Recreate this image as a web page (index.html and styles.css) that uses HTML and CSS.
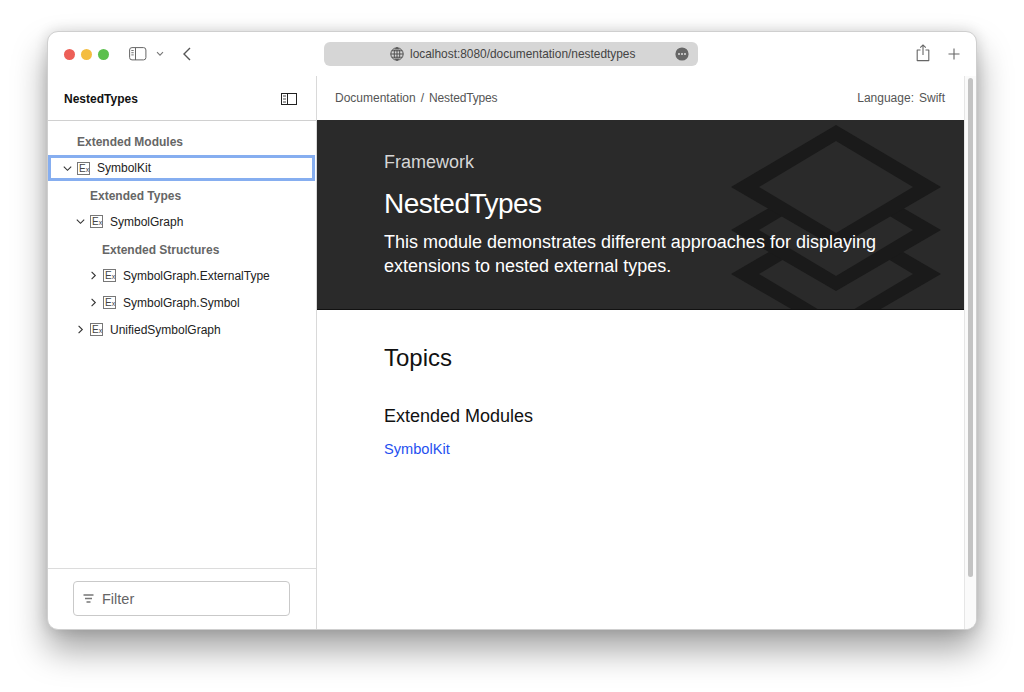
FILE: index.html
```html
<!DOCTYPE html>
<html lang="en">
<head>
<meta charset="utf-8">
<title>NestedTypes</title>
<link rel="stylesheet" href="styles.css">
</head>
<body>
<div class="window">
  <header class="toolbar">
    <div class="lights"><span class="light red"></span><span class="light yellow"></span><span class="light green"></span></div>
    <svg class="tb-sidebar" width="18" height="14" viewBox="0 0 18 14"><rect x="0.6" y="0.6" width="16.3" height="12.3" rx="2.4" fill="none" stroke="#666" stroke-width="1"/><path d="M6.5 1v12" stroke="#666" stroke-width="1"/><path d="M2.3 3.5h2.4M2.3 5.7h2.4M2.3 7.9h2.4" stroke="#777" stroke-width="1"/></svg>
    <svg class="tb-chevron" width="8" height="6" viewBox="0 0 8 6"><path d="M1 1.2 4 4.2 7 1.2" fill="none" stroke="#777" stroke-width="1.1"/></svg>
    <svg class="tb-back" width="10" height="14" viewBox="0 0 10 14"><path d="M8 1 2 7l6 6" fill="none" stroke="#555" stroke-width="1.4"/></svg>
    <div class="urlbar">
      <svg class="globe" width="14" height="14" viewBox="0 0 14 14"><g fill="none" stroke="#444" stroke-width="0.9"><circle cx="7" cy="7" r="6.2"/><ellipse cx="7" cy="7" rx="2.8" ry="6.2"/><path d="M7 .8v12.4M.8 7h12.4M1.800 3.800h10.400M1.800 10.200h10.400"/></g></svg>
      <span class="url">localhost:8080/documentation/nestedtypes</span>
      <svg class="more" width="14" height="14" viewBox="0 0 14 14"><circle cx="7" cy="7" r="6.6" fill="#666"/><circle cx="4" cy="7" r="1" fill="#ddd"/><circle cx="7" cy="7" r="1" fill="#ddd"/><circle cx="10" cy="7" r="1" fill="#ddd"/></svg>
    </div>
    <svg class="tb-share" width="14" height="18" viewBox="0 0 14 18"><path d="M4.500 6H1.200v10.600h11.600V6H9.500" fill="none" stroke="#666" stroke-width="1.1" stroke-linejoin="round"/><path d="M7 11V1M4.200 3.600 7 .9l2.800 2.700" fill="none" stroke="#666" stroke-width="1.1"/></svg>
    <svg class="tb-plus" width="12" height="12" viewBox="0 0 12 12"><path d="M6 .5v11M.5 6h11" stroke="#666" stroke-width="1.1"/></svg>
  </header>
  <div class="body">
    <aside class="sidebar">
      <div class="side-head">
        <span class="side-title">NestedTypes</span>
        <svg width="16" height="12" viewBox="0 0 16 12"><rect x="0.5" y="0.5" width="15" height="11" fill="none" stroke="#222" stroke-width="1"/><path d="M6.500 0.500v11" stroke="#222" stroke-width="1"/><path d="M2 3h3M2 6h3M2 9h3" stroke="#444" stroke-width="1"/></svg>
      </div>
      <nav class="tree">
        <div class="group lvl0">Extended Modules</div>
        <div class="row active lvl0">
          <svg class="chev" width="9" height="9" viewBox="0 0 9 9"><path d="M.8 2.600 4.500 6.300 8.200 2.600" fill="none" stroke="#333" stroke-width="1.1"/></svg>
          <span class="ex">E<small>x</small></span><span>SymbolKit</span>
        </div>
        <div class="group lvl1">Extended Types</div>
        <div class="row lvl1">
          <svg class="chev" width="9" height="9" viewBox="0 0 9 9"><path d="M.8 2.600 4.500 6.300 8.200 2.600" fill="none" stroke="#333" stroke-width="1.1"/></svg>
          <span class="ex">E<small>x</small></span><span>SymbolGraph</span>
        </div>
        <div class="group lvl2">Extended Structures</div>
        <div class="row lvl2">
          <svg class="chev" width="9" height="9" viewBox="0 0 9 9"><path d="M2.600.8 6.300 4.500 2.600 8.200" fill="none" stroke="#333" stroke-width="1.1"/></svg>
          <span class="ex">E<small>x</small></span><span>SymbolGraph.ExternalType</span>
        </div>
        <div class="row lvl2">
          <svg class="chev" width="9" height="9" viewBox="0 0 9 9"><path d="M2.600.8 6.300 4.500 2.600 8.200" fill="none" stroke="#333" stroke-width="1.1"/></svg>
          <span class="ex">E<small>x</small></span><span>SymbolGraph.Symbol</span>
        </div>
        <div class="row lvl1">
          <svg class="chev" width="9" height="9" viewBox="0 0 9 9"><path d="M2.600.8 6.300 4.500 2.600 8.200" fill="none" stroke="#333" stroke-width="1.1"/></svg>
          <span class="ex">E<small>x</small></span><span>UnifiedSymbolGraph</span>
        </div>
      </nav>
      <div class="filter-wrap">
        <div class="filter">
          <svg width="11" height="9" viewBox="0 0 11 9"><path d="M.5 1h10M2 4.500h7M3.500 8h4" stroke="#777" stroke-width="1.3"/></svg>
          <span>Filter</span>
        </div>
      </div>
    </aside>
    <main class="main">
      <div class="crumbs">
        <div class="crumb-path"><span>Documentation</span><span class="sep">/</span><span class="crumb-last">NestedTypes</span></div>
        <div class="lang"><span>Language:</span><span>Swift</span></div>
      </div>
      <section class="hero">
        <svg class="hero-logo" width="212" height="190" viewBox="0 0 212 190">
          <path d="M106 93 211 154 106 215 1 154Z" fill="#1a1a1a"/>
          <path d="M106 108 183 154 106 200 29 154Z" fill="#2a2a2a"/>
          <path d="M106 49 211 110 106 171 1 110Z" fill="#1a1a1a"/>
          <path d="M106 64 183 110 106 156 29 110Z" fill="#2a2a2a"/>
          <path d="M106 5 211 67 106 128 1 67Z" fill="#1a1a1a"/>
          <path d="M106 21 183 67 106 113 29 67Z" fill="#2a2a2a"/>
        </svg>
        <div class="eyebrow">Framework</div>
        <h1>NestedTypes</h1>
        <p>This module demonstrates different approaches for displaying extensions to nested external types.</p>
      </section>
      <section class="topics">
        <h2>Topics</h2>
        <h3>Extended Modules</h3>
        <a class="link" href="#">SymbolKit</a>
      </section>
    </main>
    <div class="scrollbar"><div class="thumb"></div></div>
  </div>
</div>
</body>
</html>
```
FILE: styles.css
```css
* { box-sizing: border-box; }
html, body { margin: 0; height: 100%; background: #fff; overflow: hidden; }
body { padding: 31px 47px 62px 47px; font-family: "Liberation Sans", Arial, sans-serif; color: #1d1d1f; }
.window {
  height: 599px; background: #fff; border: 1px solid #cfcfcf; border-radius: 11px; overflow: hidden;
  display: flex; flex-direction: column;
  box-shadow: 0 20px 34px rgba(0,0,0,.36), 0 0 14px rgba(0,0,0,.14);
}
.toolbar { height: 44px; flex: none; display: flex; align-items: center; position: relative; padding-left: 16px; }
.lights { display: flex; gap: 6px; }
.light { width: 11px; height: 11px; border-radius: 50%; }
.red { background: #ed5f57; }
.yellow { background: #f4bd40; }
.green { background: #5cc04d; }
.tb-sidebar { margin-left: 20px; }
.tb-chevron { margin-left: 9px; }
.tb-back { margin-left: 18px; }
.urlbar {
  margin-left: 132px; width: 374px; height: 24px; background: #d6d6d6; border-radius: 6px;
  display: flex; align-items: center; padding-left: 66px; padding-right: 9px; font-size: 11.900px; color: #444;
}
.url { margin-left: 6px; flex: 1; white-space: nowrap; }
.tb-share { margin-left: 218px; margin-top: -2px; }
.tb-plus { margin-left: 18px; }
.body { flex: 1; display: flex; min-height: 0; }
.sidebar { width: 269px; flex: none; border-right: 1px solid #d9d9d9; display: flex; flex-direction: column; }
.side-head {
  height: 45px; flex: none; border-bottom: 1px solid #d0d0d0; display: flex; align-items: center; justify-content: space-between;
  padding: 1px 19px 0 16px;
}
.side-title { font-size: 12px; font-weight: 700; color: #111; }
.tree { flex: 1; padding-top: 7px; font-size: 12px; color: #222; }
.group { height: 27px; display: flex; align-items: center; font-weight: 700; color: #666; font-size: 12px; }
.group.lvl0 { padding-left: 29px; }
.group.lvl1 { padding-left: 42px; padding-top: 2px; }
.group.lvl2 { padding-left: 54px; padding-top: 2px; }
.row { height: 27px; display: flex; align-items: center; }
.row.lvl0 { padding-left: 15px; }
.row.lvl1 { padding-left: 28px; }
.row.lvl2 { padding-left: 41px; }
.row.active { border: 3px solid #86aef0; height: 26px; padding-left: 12px; margin-right: 1px; }
.chev { flex: none; margin-right: 5px; }
.ex {
  flex: none; width: 13px; height: 13px; border: 1px solid #777; margin-right: 7px; font-size: 10px; line-height: 11px; color: #444;
  padding-left: 1px; display: block; white-space: nowrap; overflow: hidden;
}
.ex small { font-size: 7px; }
.filter-wrap { height: 61px; flex: none; border-top: 1px solid #dcdcdc; padding: 12px 26px 13px 25px; }
.filter {
  height: 35px; border: 1px solid #c9c9c9; border-radius: 4px; display: flex; align-items: center; gap: 8px; padding-left: 9px;
  font-size: 14.500px; color: #666;
}
.main { flex: 1; min-width: 0; display: flex; flex-direction: column; }
.crumbs {
  height: 44px; flex: none; display: flex; align-items: center; justify-content: space-between; padding: 0 19px 0 18px;
  font-size: 12px; color: #555;
}
.crumb-path, .lang { display: flex; gap: 5px; }
.crumb-last { letter-spacing: -.15px; }
.hero {
  height: 190px; flex: none; background: #2a2a2a; color: #fff; padding: 30px 80px 0 67px; position: relative; overflow: hidden;
  border-bottom: 1px solid #111;
}
.hero-logo { position: absolute; right: 22px; top: 0; }
.eyebrow, .hero h1, .hero p { position: relative; }
.eyebrow { font-size: 18px; line-height: 24px; color: #d6d6d6; }
.hero h1 { margin: 12px 0 0; font-size: 28px; line-height: 36px; font-weight: 400; letter-spacing: -.55px; }
.hero p { margin: 8px 0 0; font-size: 18px; line-height: 24px; }
.topics { padding: 32px 67px 0; }
.topics h2 { margin: 0; font-size: 24px; line-height: 32px; font-weight: 400; color: #111; }
.topics h3 { margin: 30px 0 0; font-size: 18px; line-height: 24px; font-weight: 400; color: #111; }
.link { display: block; margin-top: 11px; font-size: 14.600px; line-height: 20px; color: #1f50f0; text-decoration: none; }
.scrollbar { width: 12px; flex: none; background: #fafafa; border-left: 1px solid #e6e6e6; padding: 2px 3px; }
.thumb { height: 499px; background: #c3c3c3; border-radius: 3px; }
```
